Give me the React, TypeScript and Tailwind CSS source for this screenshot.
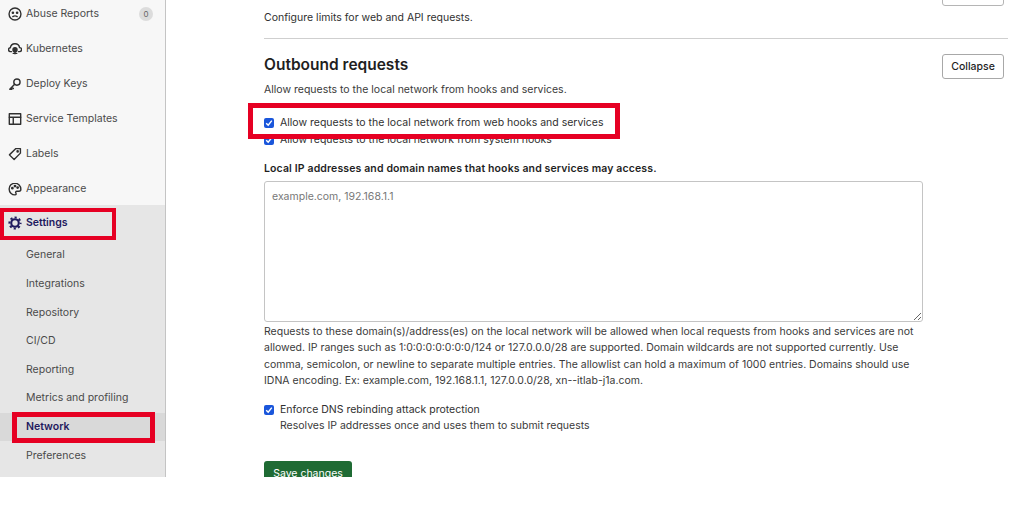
import type { ReactNode } from "react";

const font = { fontFamily: '"Inter", "Liberation Sans", sans-serif' };

function Icon({ children, color = "#303030" }: { children: ReactNode; color?: string }) {
  return (
    <svg width="14" height="14" viewBox="0 0 16 16" fill="none" stroke={color} strokeWidth="1.6" strokeLinecap="round" strokeLinejoin="round" className="shrink-0">
      {children}
    </svg>
  );
}

const topItems: { label: string; icon: ReactNode; badge?: string }[] = [
  {
    label: "Abuse Reports",
    badge: "0",
    icon: (
      <>
        <circle cx="8" cy="8" r="6.8" />
        <circle cx="5.6" cy="6.6" r="0.7" fill="#303030" />
        <circle cx="10.4" cy="6.6" r="0.7" fill="#303030" />
        <path d="M5.5 11c1.5-1 3.5-1 5 0" />
      </>
    ),
  },
  {
    label: "Kubernetes",
    icon: (
      <>
        <path d="M4 11H3a2.2 2.2 0 0 1-.3-4.4A5.3 5.3 0 0 1 13.2 6.4a2.3 2.3 0 0 1 0 4.6H12" />
        <circle cx="8" cy="8.8" r="2.3" fill="#303030" />
        <path d="M8 11v2.5M6 13h4" />
      </>
    ),
  },
  {
    label: "Deploy Keys",
    icon: (
      <>
        <circle cx="10.2" cy="5.8" r="3.6" />
        <path d="M7.6 8.4 2 14M2 14h2.5M4.5 11.5l1.6 1.6" />
      </>
    ),
  },
  {
    label: "Service Templates",
    icon: (
      <>
        <rect x="1.5" y="2" width="13" height="12" />
        <path d="M1.5 6h13M6 6v8" />
      </>
    ),
  },
  {
    label: "Labels",
    icon: (
      <>
        <path d="M9 1.8h5.2V7L7 14.4 1.6 9z" />
        <circle cx="11" cy="5" r="0.7" fill="#303030" />
      </>
    ),
  },
  {
    label: "Appearance",
    icon: (
      <>
        <path d="M8 1.3a6.7 6.7 0 1 0 0 13.4c1.5 0 1.6-1.2 1-2-.8-1 0-2.2 1.2-2.2h2.3c1.3 0 2.2-.9 2.2-2.3 0-3.8-3-6.9-6.7-6.9z" />
        <circle cx="5" cy="7" r="0.8" fill="#303030" />
        <circle cx="8" cy="4.6" r="0.8" fill="#303030" />
        <circle cx="11" cy="6.4" r="0.8" fill="#303030" />
      </>
    ),
  },
];

const subItems = ["General", "Integrations", "Repository", "CI/CD", "Reporting", "Metrics and profiling", "Network", "Preferences"];

function Check() {
  return (
    <span className="w-[10px] h-[10px] rounded-[2px] bg-[#1a56db] flex items-center justify-center shrink-0">
      <svg width="8" height="8" viewBox="0 0 10 10" fill="none" stroke="white" strokeWidth="1.8">
        <path d="M1.5 5.2 4 7.8 8.5 2" />
      </svg>
    </span>
  );
}

function Sidebar() {
  return (
    <aside className="w-[166px] h-full shrink-0 bg-[#f7f7f7] border-r border-[#c4c4c4] text-[10.5px] text-[#4a4a4a] overflow-hidden">
      <div className="-mt-[4px]">
        {topItems.map((item) => (
          <div key={item.label} className="h-[35px] pl-2 pr-3 flex items-center gap-[4px]">
            <Icon>{item.icon}</Icon>
            <span className="flex-1">{item.label}</span>
            {item.badge && (
              <span className="w-[14px] h-[14px] rounded-full bg-[#dcdcdc] text-[8px] text-[#666] flex items-center justify-center">
                {item.badge}
              </span>
            )}
          </div>
        ))}
      </div>
      <div className="bg-[#e6e6e6] h-full -mt-[1px]">
        <div className="h-[35px] pt-[1px] pl-2 flex items-center gap-[4px] font-semibold text-[#1f1a5e]">
          <svg width="14" height="14" viewBox="0 0 16 16" fill="none" stroke="#1f1a5e" className="shrink-0">
            <circle cx="8" cy="8" r="4.3" strokeWidth="2.4" />
            <circle cx="8" cy="8" r="6.4" strokeWidth="2.2" strokeDasharray="2.51 2.51" strokeDashoffset="1.25" />
          </svg>
          Settings
        </div>
        <div className="pt-[1px]">
          {subItems.map((s) => (
            <div
              key={s}
              className={`h-[28.6px] pl-[26px] flex items-center ${s === "Network" ? "bg-[#d9d9d9] font-semibold text-[#1f1a5e]" : ""}`}
            >
              {s}
            </div>
          ))}
        </div>
      </div>
    </aside>
  );
}

function Content() {
  return (
    <main className="flex-1 pl-[98px] pr-[16px] text-[10.5px] text-[#303030] overflow-hidden">
      <div className="flex justify-end pr-[4px] h-[6px] -mt-[20px] mb-[5px]">
        <div className="w-[62px] h-[26px] shrink-0 border border-[#b5b5b5] rounded-[3px]" />
      </div>
      <p className="pt-[20px] h-[41px] leading-[14px]">Configure limits for web and API requests.</p>
      <div className="border-t border-[#cfcfcf] mt-[6px]" />
      <div className="flex justify-between items-start pr-[4px] pt-[15px]">
        <h2 className="mt-[1px] text-[15.5px] leading-[20px] font-semibold text-[#1f1f1f]">Outbound requests</h2>
        <button className="w-[62px] h-[25px] border border-[#a8a8a8] rounded-[3px] text-[10.5px] font-medium text-[#1f1f1f] bg-white">
          Collapse
        </button>
      </div>
      <p className="mt-[4px] leading-[14px] text-[#3a3a3a]">Allow requests to the local network from hooks and services.</p>
      <div className="mt-[19px] flex items-center gap-[6px] h-[14px]">
        <Check />
        <span>Allow requests to the local network from web hooks and services</span>
      </div>
      <div className="mt-[3px] flex items-center gap-[6px] h-[14px]">
        <Check />
        <span>Allow requests to the local network from system hooks</span>
      </div>
      <p className="mt-[15px] font-semibold leading-[14px] tracking-[0.13px] text-[#1f1f1f]">Local IP addresses and domain names that hooks and services may access.</p>
      <textarea
        readOnly
        placeholder="example.com, 192.168.1.1"
        className="block mt-[5px] w-[659px] h-[141px] border border-[#c4c4c4] rounded-[3px] px-[7px] py-[7px] text-[10.5px] placeholder:text-[#777] outline-none"
      />
      <p className="w-[659px] mt-[2px] leading-[16.4px] text-[#3a3a3a]">
        Requests to these domain(s)/address(es) on the local network will be allowed when local requests from hooks and services are not allowed. IP ranges such as 1:0:0:0:0:0:0:0/124 or 127.0.0.0/28 are supported. Domain wildcards are not supported currently. Use comma, semicolon, or newline to separate multiple entries. The allowlist can hold a maximum of 1000 entries. Domains should use IDNA encoding. Ex: example.com, 192.168.1.1, 127.0.0.0/28, xn--itlab-j1a.com.
      </p>
      <div className="mt-[13px] flex items-center gap-[6px] h-[14px]">
        <Check />
        <span>Enforce DNS rebinding attack protection</span>
      </div>
      <p className="pl-[16px] mt-[1px] leading-[16px] text-[#3a3a3a]">Resolves IP addresses once and uses them to submit requests</p>
      <button className="block mt-[27px] w-[88px] h-[26px] bg-[#1f6b34] rounded-t-[3px] text-white text-[10.5px]">Save changes</button>
    </main>
  );
}

export default function App() {
  return (
    <div className="relative w-[1024px] h-[508px] bg-white overflow-hidden" style={font}>
      <div className="flex h-[477px] overflow-hidden">
        <Sidebar />
        <Content />
      </div>
      {/* red annotation boxes */}
      <div className="absolute left-0 top-[208px] w-[116px] h-[32px] border-[4px] border-[#e60023]" />
      <div className="absolute left-[12px] top-[412px] w-[143px] h-[31px] border-[5px] border-[#e60023]" />
      <div className="absolute left-[248px] top-[103px] w-[372px] h-[36px] border-[5px] border-[#e60023]" />
    </div>
  );
}
